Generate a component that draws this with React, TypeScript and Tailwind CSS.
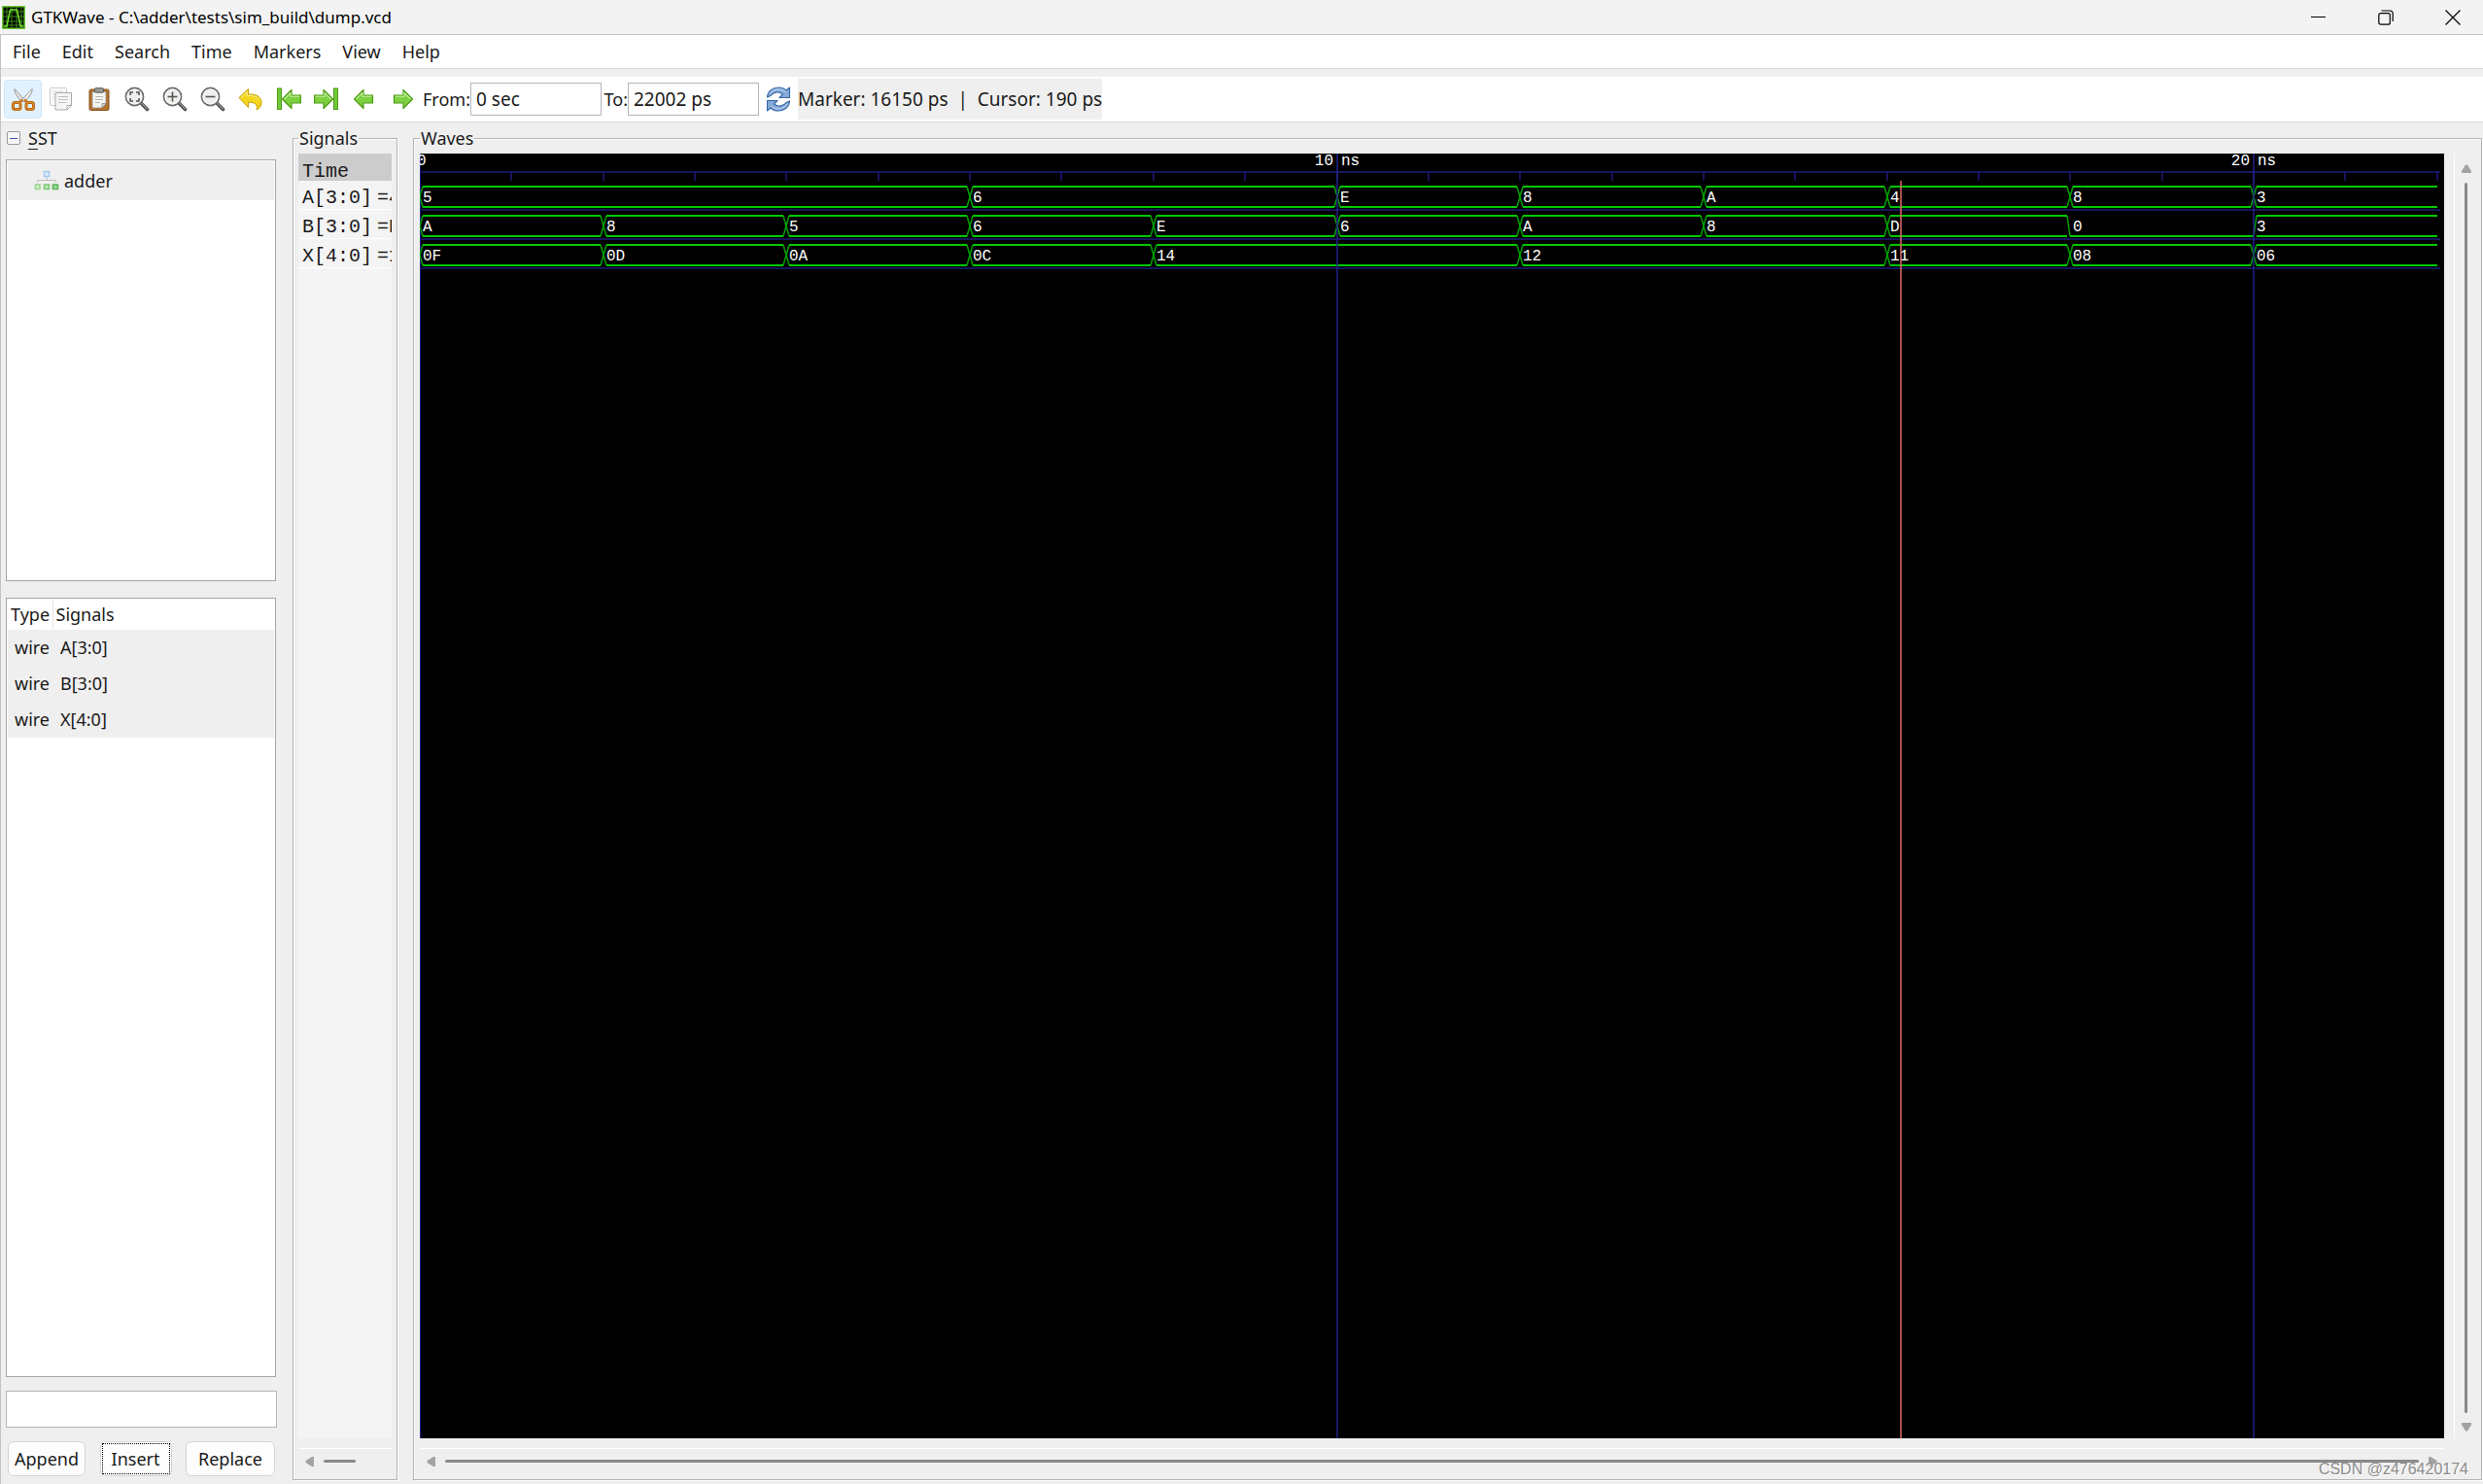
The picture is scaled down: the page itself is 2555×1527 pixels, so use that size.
import React from 'react';

type Segment = { at: number; value: string };

interface Trace {
   name: string;
   current: string;
   segments: Segment[];
}

const menus = ['File', 'Edit', 'Search', 'Time', 'Markers', 'View', 'Help'];

const traces: Trace[] = [
   {
      name: 'A[3:0]',
      current: '4',
      segments: [
         { at: 0, value: '5' },
         { at: 6, value: '6' },
         { at: 10, value: 'E' },
         { at: 12, value: '8' },
         { at: 14, value: 'A' },
         { at: 16, value: '4' },
         { at: 18, value: '8' },
         { at: 20, value: '3' },
      ],
   },
   {
      name: 'B[3:0]',
      current: 'D',
      segments: [
         { at: 0, value: 'A' },
         { at: 2, value: '8' },
         { at: 4, value: '5' },
         { at: 6, value: '6' },
         { at: 8, value: 'E' },
         { at: 10, value: '6' },
         { at: 12, value: 'A' },
         { at: 14, value: '8' },
         { at: 16, value: 'D' },
         { at: 18, value: '0' },
         { at: 20, value: '3' },
      ],
   },
   {
      name: 'X[4:0]',
      current: '11',
      segments: [
         { at: 0, value: '0F' },
         { at: 2, value: '0D' },
         { at: 4, value: '0A' },
         { at: 6, value: '0C' },
         { at: 8, value: '14' },
         { at: 12, value: '12' },
         { at: 16, value: '11' },
         { at: 18, value: '08' },
         { at: 20, value: '06' },
      ],
   },
];

// Wave canvas scale
const NS = 94.35;
const END = 22;
const MARKER = 16.15;
const px = (ns: number) => Math.round(ns * NS);

const AppLogo = () => (
   <svg width="24" height="24" viewBox="0 0 24 24">
      <rect x="0.75" y="0.75" width="22.5" height="22.5" fill="#000" stroke="#6cc832" strokeWidth="1.5" />
      <path d="M5 1v22M10 1v22M15 1v22M20 1v22M1 6h22M1 11h22M1 16h22M1 20h22" stroke="#3a8a18" strokeWidth="1" />
      <path d="M2 21h3L8.5 4h7L19 21h3" fill="none" stroke="#72e02a" strokeWidth="1.5" />
   </svg>
);

const CutIcon = () => (
   <svg width="24" height="24" viewBox="0 0 24 24">
      <path d="M3 1.5C2.5 5 5 9 11 15l2-2.5C9 8 5.5 4 3 1.5z" fill="#e4e5e2" stroke="#8b8d89" strokeWidth="0.9" />
      <path d="M21 1.5c.5 3.5-2 7.5-8 13.5l-2-2.5c4-4.5 7.5-8.5 10-11z" fill="#f2f2f0" stroke="#8b8d89" strokeWidth="0.9" />
      <rect x="1.5" y="15.5" width="7.5" height="7" rx="2" fill="none" stroke="#b8640c" strokeWidth="3" />
      <rect x="15" y="15.5" width="7.5" height="7" rx="2" fill="none" stroke="#b8640c" strokeWidth="3" />
      <path d="M8 15l3-2.5M16 15l-3-2.5" stroke="#c9761c" strokeWidth="2.5" />
      <rect x="1.5" y="15.5" width="7.5" height="7" rx="2" fill="none" stroke="#e2953c" strokeWidth="1" />
      <rect x="15" y="15.5" width="7.5" height="7" rx="2" fill="none" stroke="#e2953c" strokeWidth="1" />
   </svg>
);

const CopyIcon = () => (
   <svg width="24" height="24" viewBox="0 0 24 24">
      <rect x="0.5" y="0.5" width="17" height="18" rx="1" fill="#fafafa" stroke="#c9cac8" />
      <path d="M3 4h11M3 7h3M3 10h2M3 13h2" stroke="#dcdcda" />
      <path d="M6 5.5h16.5v13l-4.5 4.5H6z" fill="#f5f5f4" stroke="#a9aaa7" />
      <path d="M9 9.5h10M9 12.5h10M9 15.5h8" stroke="#bdbdbb" />
      <path d="M22.5 18.5H18V23z" fill="#fff" stroke="#a9aaa7" />
   </svg>
);

const PasteIcon = () => (
   <svg width="24" height="24" viewBox="0 0 24 24">
      <rect x="2" y="2" width="20" height="21.5" rx="1.5" fill="#b5722a" stroke="#85511b" />
      <path d="M5 4.5h14v12L15 21H5z" fill="#f4f4f3" stroke="#8f8f8b" strokeWidth="0.8" />
      <rect x="7.5" y="0.7" width="9" height="4.5" rx="1" fill="#9a9b97" stroke="#555753" />
      <path d="M8 9.5h8M8 12.5h8M8 15.5h5" stroke="#b4b4b1" />
      <path d="M19 16.5h-4V21z" fill="#d3d3d0" stroke="#8f8f8b" strokeWidth="0.8" />
   </svg>
);

const ZoomIcon: React.FC<{ kind: 'fit' | 'in' | 'out' }> = ({ kind }) => (
   <svg width="26" height="26" viewBox="0 0 26 26">
      <path d="M16.5 16.5l7 7" stroke="#4c4e4b" strokeWidth="3.6" strokeLinecap="round" />
      <path d="M17.5 17l6 6" stroke="#8e908c" strokeWidth="1.2" strokeLinecap="round" />
      <circle cx="10.5" cy="10.5" r="9" fill="#eef0ee" stroke="#6d6f6c" strokeWidth="1.8" />
      <circle cx="10.5" cy="10.5" r="7.6" fill="none" stroke="#fff" strokeWidth="0.9" />
      {kind === 'fit' && (
         <path d="M6 9V6h3M12 6h3v3M15 12v3h-3M9 15H6v-3" fill="none" stroke="#4c4e4b" strokeWidth="1.5" />
      )}
      {kind !== 'fit' && <path d="M5.5 10.5h10" stroke="#555753" strokeWidth="1.6" />}
      {kind === 'in' && <path d="M10.5 5.5v10" stroke="#555753" strokeWidth="1.6" />}
   </svg>
);

const UndoIcon = () => (
   <svg width="26" height="26" viewBox="0 0 26 26">
      <path
         d="M1 11.5L10.5 2.5V8C19 7.5 24 11 24 16.5c0 3.5-2 6-5 7.5 1.5-3.5 0-8-8.5-8v5.5z"
         fill="#f3d51e"
         stroke="#c6a000"
         strokeLinejoin="round"
      />
      <path d="M3 11.5l6.5-6v4C16 9 20.5 11 22 14" fill="none" stroke="#fcf08d" strokeWidth="1" />
   </svg>
);

const ArrowIcon: React.FC<{ flip?: boolean; bar?: boolean }> = ({ flip, bar }) => (
   <svg width="26" height="24" viewBox="0 0 26 24">
      <g transform={flip ? 'matrix(-1 0 0 1 26 0)' : undefined}>
         {bar && <rect x="1.5" y="1" width="4" height="21.5" fill="#73c93a" stroke="#4b9a12" />}
         <g transform={bar ? 'translate(4 0)' : undefined}>
            <path
               d="M2.5 12L12 2.5V8h9.5v8H12v5.5z"
               fill="#7ed040"
               stroke="#4b9a12"
               strokeWidth="1.2"
               strokeLinejoin="round"
            />
            <path d="M4.5 12L11 5.5V9.2h9.3" fill="none" stroke="#c2f09b" strokeWidth="1.1" />
         </g>
      </g>
   </svg>
);

const ReloadIcon = () => (
   <svg width="26" height="26" viewBox="0 0 26 26">
      <g id="half">
         <path
            d="M1.5 11C2 4.5 7 1 13 1c3.5 0 6 1 8 3l3.5-3v10.5H14L17.5 8C13 4.5 7.5 6 5 9.5z"
            fill="#86aad8"
            stroke="#3465a4"
            strokeWidth="1.1"
            strokeLinejoin="round"
         />
         <path d="M4 8C7 2.5 15 1 20.5 5.5" fill="none" stroke="#c5d8ee" />
      </g>
      <use href="#half" transform="rotate(180 13 13)" />
   </svg>
);

const TreeIcon = () => (
   <svg width="26" height="22" viewBox="0 0 26 22">
      <path d="M3.5 12.5v-2h19v2M13 7v4" fill="none" stroke="#bfc1be" />
      <rect x="10.5" y="1.5" width="5" height="5" fill="#dcebfa" stroke="#a4c8ee" strokeWidth="1.5" />
      <rect x="1.5" y="15" width="4.5" height="4.5" fill="#d5efcd" stroke="#9bd68c" strokeWidth="1.5" />
      <rect x="10.5" y="15" width="5" height="4.5" fill="#bfe6b8" stroke="#7cc873" strokeWidth="1.5" />
      <rect x="19.5" y="15" width="5" height="4.5" fill="#a5d8a0" stroke="#5cb455" strokeWidth="1.5" />
   </svg>
);

const tools = [
   { label: 'Cut', icon: <CutIcon /> },
   { label: 'Copy', icon: <CopyIcon /> },
   { label: 'Paste', icon: <PasteIcon /> },
   { label: 'Zoom Fit', icon: <ZoomIcon kind="fit" /> },
   { label: 'Zoom In', icon: <ZoomIcon kind="in" /> },
   { label: 'Zoom Out', icon: <ZoomIcon kind="out" /> },
   { label: 'Zoom Undo', icon: <UndoIcon /> },
   { label: 'Zoom to Start', icon: <ArrowIcon bar /> },
   { label: 'Zoom to End', icon: <ArrowIcon bar flip /> },
   { label: 'Find Previous Edge', icon: <ArrowIcon /> },
   { label: 'Find Next Edge', icon: <ArrowIcon flip /> },
];

const TitleBar = () => (
   <header className="flex h-9 shrink-0 items-center border-b border-[#c3c3c3] bg-[#f3f3f3] pr-1 pl-0.5">
      <AppLogo />
      <h1 className="ml-1.5 flex-1 text-[17px] text-black">
         GTKWave - C:\adder\tests\sim_build\dump.vcd
      </h1>
      <div className="flex h-full">
         <button aria-label="Minimize" className="flex w-[69px] items-center justify-center">
            <svg width="15" height="15" viewBox="0 0 15 15">
               <path d="M0 7.5h15" stroke="#000" />
            </svg>
         </button>
         <button aria-label="Restore" className="flex w-[69px] items-center justify-center">
            <svg width="16" height="16" viewBox="0 0 16 16" fill="none" stroke="#000" strokeWidth="1.2">
               <rect x="0.8" y="3.7" width="11.5" height="11.5" rx="2" />
               <path d="M3.5 1h8.5a3.2 3.2 0 0 1 3.2 3.2V12" />
            </svg>
         </button>
         <button aria-label="Close" className="flex w-[62px] items-center justify-center pl-2">
            <svg width="16" height="16" viewBox="0 0 16 16">
               <path d="M.5.5l15 15M15.5.5l-15 15" stroke="#000" strokeWidth="1.2" />
            </svg>
         </button>
      </div>
   </header>
);

const MenuBar = () => (
   <nav className="flex h-[35px] shrink-0 items-center border-b border-[#dcdcdc] bg-white pl-px">
      {menus.map((menu) => (
         <button key={menu} className="px-[11px]">
            {menu}
         </button>
      ))}
   </nav>
);

const Toolbar = () => (
   <div className="mt-2 flex h-[47px] shrink-0 items-center border-b border-[#dcdcdc] bg-white pl-[3px]">
      {tools.map((tool, i) => (
         <button
            key={tool.label}
            aria-label={tool.label}
            className={
               i === 0
                  ? 'flex h-10 w-[39px] items-center justify-center rounded-sm border border-[#cce6fb] bg-[#e1f1ff]'
                  : 'flex h-10 w-[39px] items-center justify-center'
            }
         >
            {tool.icon}
         </button>
      ))}
      <label htmlFor="from" className="w-[51px] text-right">
         From:
      </label>
      <input
         id="from"
         defaultValue="0 sec"
         className="h-[34px] w-[135px] border border-[#b4b4be] bg-white px-[5px] text-[19px] outline-none"
      />
      <label htmlFor="to" className="w-[27px] text-right">
         To:
      </label>
      <input
         id="to"
         defaultValue="22002 ps"
         className="h-[34px] w-[135px] border border-[#b4b4be] bg-white px-[5px] text-[19px] outline-none"
      />
      <button aria-label="Reload" className="flex w-10 items-center justify-center">
         <ReloadIcon />
      </button>
      <p className="flex h-[42px] items-center bg-[#efefef] text-[19px] whitespace-pre">
         {'Marker: 16150 ps  |  Cursor: 190 ps'}
      </p>
   </div>
);

const SidePanel = () => (
   <aside className="flex w-[284px] shrink-0 flex-col pl-[5px]">
      <div className="flex h-8 items-center">
         <button
            aria-label="Collapse SST"
            className="ml-px flex size-3.5 items-center justify-center rounded-xs border border-[#9a9a9a] bg-[#f7f7f7]"
         >
            <span className="h-px w-2 bg-[#3c54b4]" />
         </button>
         <span className="ml-2">
            <u className="underline-offset-4">S</u>ST
         </span>
      </div>
      <div className="mt-1.5 mr-px h-[434px] border border-[#a6a6a6] bg-white p-px">
         <div className="flex h-10 items-center bg-[#efefef] pl-[27px]">
            <TreeIcon />
            <span className="ml-[5px]">adder</span>
         </div>
      </div>
      <div className="mt-[17px] mr-px min-h-0 flex-1 border border-[#a6a6a6] bg-white p-px">
         <table className="w-full border-collapse text-left">
            <thead>
               <tr className="h-[31px]">
                  <th className="w-[46px] border-r border-[#e4e4e4] pl-[3px] font-normal">Type</th>
                  <th className="pl-[3px] font-normal">Signals</th>
               </tr>
            </thead>
            <tbody>
               {traces.map((trace) => (
                  <tr key={trace.name} className="h-[37px] bg-[#efefef]">
                     <td className="pl-[7px]">wire</td>
                     <td className="pl-2">{trace.name}</td>
                  </tr>
               ))}
            </tbody>
         </table>
      </div>
      <input
         aria-label="Filter"
         className="mt-3.5 h-[38px] shrink-0 border border-[#b4b4be] bg-white px-1.5 outline-none"
      />
      <div className="mt-3.5 mb-2 flex h-9 shrink-0 justify-between px-0.5">
         <button className="w-20 rounded-md border border-[#d4d4d4] bg-[#fdfdfd]">Append</button>
         <button className="w-[74px] rounded-md border border-[#d4d4d4] bg-[#fdfdfd] p-px">
            <span className="flex h-full items-center justify-center border border-dotted border-black">Insert</span>
         </button>
         <button className="w-[92px] rounded-md border border-[#d4d4d4] bg-[#fdfdfd]">Replace</button>
      </div>
   </aside>
);

const Triangle: React.FC<{ turn: string }> = ({ turn }) => (
   <svg width="12" height="12" viewBox="0 0 12 12" className={turn}>
      <path d="M10 1v10H8L1.5 7V5L8 1z" fill="#a3a3a3" />
   </svg>
);

const SignalsPanel = () => (
   <fieldset className="mb-1 flex w-[108px] min-w-0 shrink-0 flex-col border border-[#b4b4b4] px-[5px] shadow-[inset_1px_1px_#fff,1px_1px_#fff]">
      <legend className="h-8 px-px leading-8">Signals</legend>
      <div className="flex h-full flex-col">
         <div className="min-h-0 flex-1 overflow-hidden bg-[#f4f4f4] font-['Liberation_Mono'] text-[20px]">
            <div className="h-7 bg-[#ccc] pl-1 leading-[38px]">Time</div>
            {traces.map((trace) => (
               <div
                  key={trace.name}
                  className="flex h-[30px] gap-[5px] overflow-hidden border-b border-white pl-1 leading-9 whitespace-nowrap"
               >
                  <span>{trace.name}</span>
                  <span>={trace.current}</span>
               </div>
            ))}
         </div>
         <div className="mt-2.5 flex h-8 shrink-0 items-center gap-2 border-t border-white pb-1.5 pl-1.5">
            <Triangle turn="" />
            <span className="h-[3px] w-[33px] rounded-full bg-[#8a8a8a]" />
         </div>
      </div>
   </fieldset>
);

const isZero = (seg?: Segment) => !!seg && /^0+$/.test(seg.value);

const WaveRow: React.FC<{ trace: Trace; top: number }> = ({ trace, top }) => {
   const bottom = top + 21;
   const mid = top + 10.5;
   return (
      <g fill="none">
         <path d={`M0 ${bottom + 3}H${px(END) + 3}`} stroke="#1c1c78" strokeWidth="1.5" />
         {trace.segments.map((seg, i) => {
            const prev = trace.segments[i - 1];
            const next = trace.segments[i + 1];
            const zero = isZero(seg);
            const x1 = px(seg.at);
            const x2 = px(next ? next.at : END);
            const left = zero ? x1 : x1 + 3;
            const right = zero || !next ? x2 : x2 - 3;
            // an all-zero bus stays on the lower rail
            const rails = zero ? `M${left} ${bottom}H${right}` : `M${left} ${top}H${right}M${left} ${bottom}H${right}`;
            const open = isZero(prev)
               ? `M${x1} ${bottom}L${x1 + 3} ${top}`
               : `M${x1 + 3} ${top}L${x1} ${mid}L${x1 + 3} ${bottom}`;
            const close = isZero(next)
               ? `M${x2 - 3} ${top}L${x2} ${bottom}`
               : `M${x2 - 3} ${top}L${x2} ${mid}L${x2 - 3} ${bottom}`;
            return (
               <g key={seg.at}>
                  {!zero && <path d={next ? open + close : open} stroke="#00a000" strokeWidth="1.5" />}
                  <path d={rails} stroke="#00c800" strokeWidth="2" />
                  <text x={x1 + 3} y={bottom - 5} fill="#fff">
                     {seg.value}
                  </text>
               </g>
            );
         })}
      </g>
   );
};

const WaveCanvas = () => (
   <svg className="block h-full w-full bg-black font-['Liberation_Mono'] text-[16px]">
      <line x1="0.5" x2="0.5" y1="0" y2="100%" stroke="#2a2a90" />
      <path d={`M0 19H${px(END) + 3}`} stroke="#1c1c78" strokeWidth="1.5" />
      {Array.from({ length: END + 1 }, (_, ns) => (
         <path key={ns} d={`M${px(ns)} 19v9`} stroke="#1c1c78" strokeWidth="1.5" />
      ))}
      {traces.map((trace, i) => (
         <WaveRow key={trace.name} trace={trace} top={34 + i * 30} />
      ))}
      {[10, 20].map((ns) => (
         <g key={ns}>
            <line x1={px(ns)} x2={px(ns)} y1="0" y2="100%" stroke="#22228a" strokeWidth="1.5" />
            <text x={px(ns) - 4} y="12" fill="#fff" textAnchor="end">
               {ns}
            </text>
            <text x={px(ns) + 4} y="12" fill="#fff">
               ns
            </text>
         </g>
      ))}
      <text x="-3" y="12" fill="#fff">
         0
      </text>
      <line x1={px(MARKER)} x2={px(MARKER)} y1="28" y2="100%" stroke="#e06a6a" strokeWidth="1.5" />
   </svg>
);

const WavesPanel = () => (
   <fieldset className="mb-1 flex min-w-0 flex-1 flex-col border border-[#b4b4b4] pl-1.5 shadow-[inset_1px_1px_#fff,1px_1px_#fff]">
      <legend className="h-8 px-px leading-8">Waves</legend>
      <div className="flex h-full flex-col">
         <div className="flex min-h-0 flex-1">
            <div className="min-w-0 flex-1">
               <WaveCanvas />
            </div>
            <div className="ml-2.5 flex w-7 flex-col items-center gap-2 border-l border-white pt-2.5 pr-1 pb-1.5">
               <Triangle turn="rotate-90" />
               <span className="w-[3px] flex-1 rounded-full bg-[#8a8a8a]" />
               <Triangle turn="-rotate-90" />
            </div>
         </div>
         <div className="mt-2.5 mr-[38px] flex h-8 shrink-0 items-center gap-2 border-t border-white pr-1.5 pb-1.5 pl-1.5">
            <Triangle turn="" />
            <span className="h-[3px] flex-1 rounded-full bg-[#8a8a8a]" />
            <Triangle turn="rotate-180" />
         </div>
      </div>
   </fieldset>
);

const App = () => (
   <div className="relative flex h-screen flex-col overflow-hidden bg-[#efefef] font-['Noto_Sans',sans-serif] text-[18px] text-[#1a1a1a]">
      <TitleBar />
      <div className="flex min-h-0 flex-1 flex-col border-l border-[#c3c3c3]">
         <MenuBar />
         <Toolbar />
         <main className="flex min-h-0 flex-1">
            <SidePanel />
            <div className="ml-4 flex min-w-0 flex-1 gap-4 pr-px">
               <SignalsPanel />
               <WavesPanel />
            </div>
         </main>
      </div>
      <span className="absolute right-[15px] bottom-[3px] font-['Liberation_Sans'] text-[16px] text-[#8c8c8c] [text-shadow:1px_1px_#fff]">
         CSDN @z476420174
      </span>
   </div>
);

export default App;
